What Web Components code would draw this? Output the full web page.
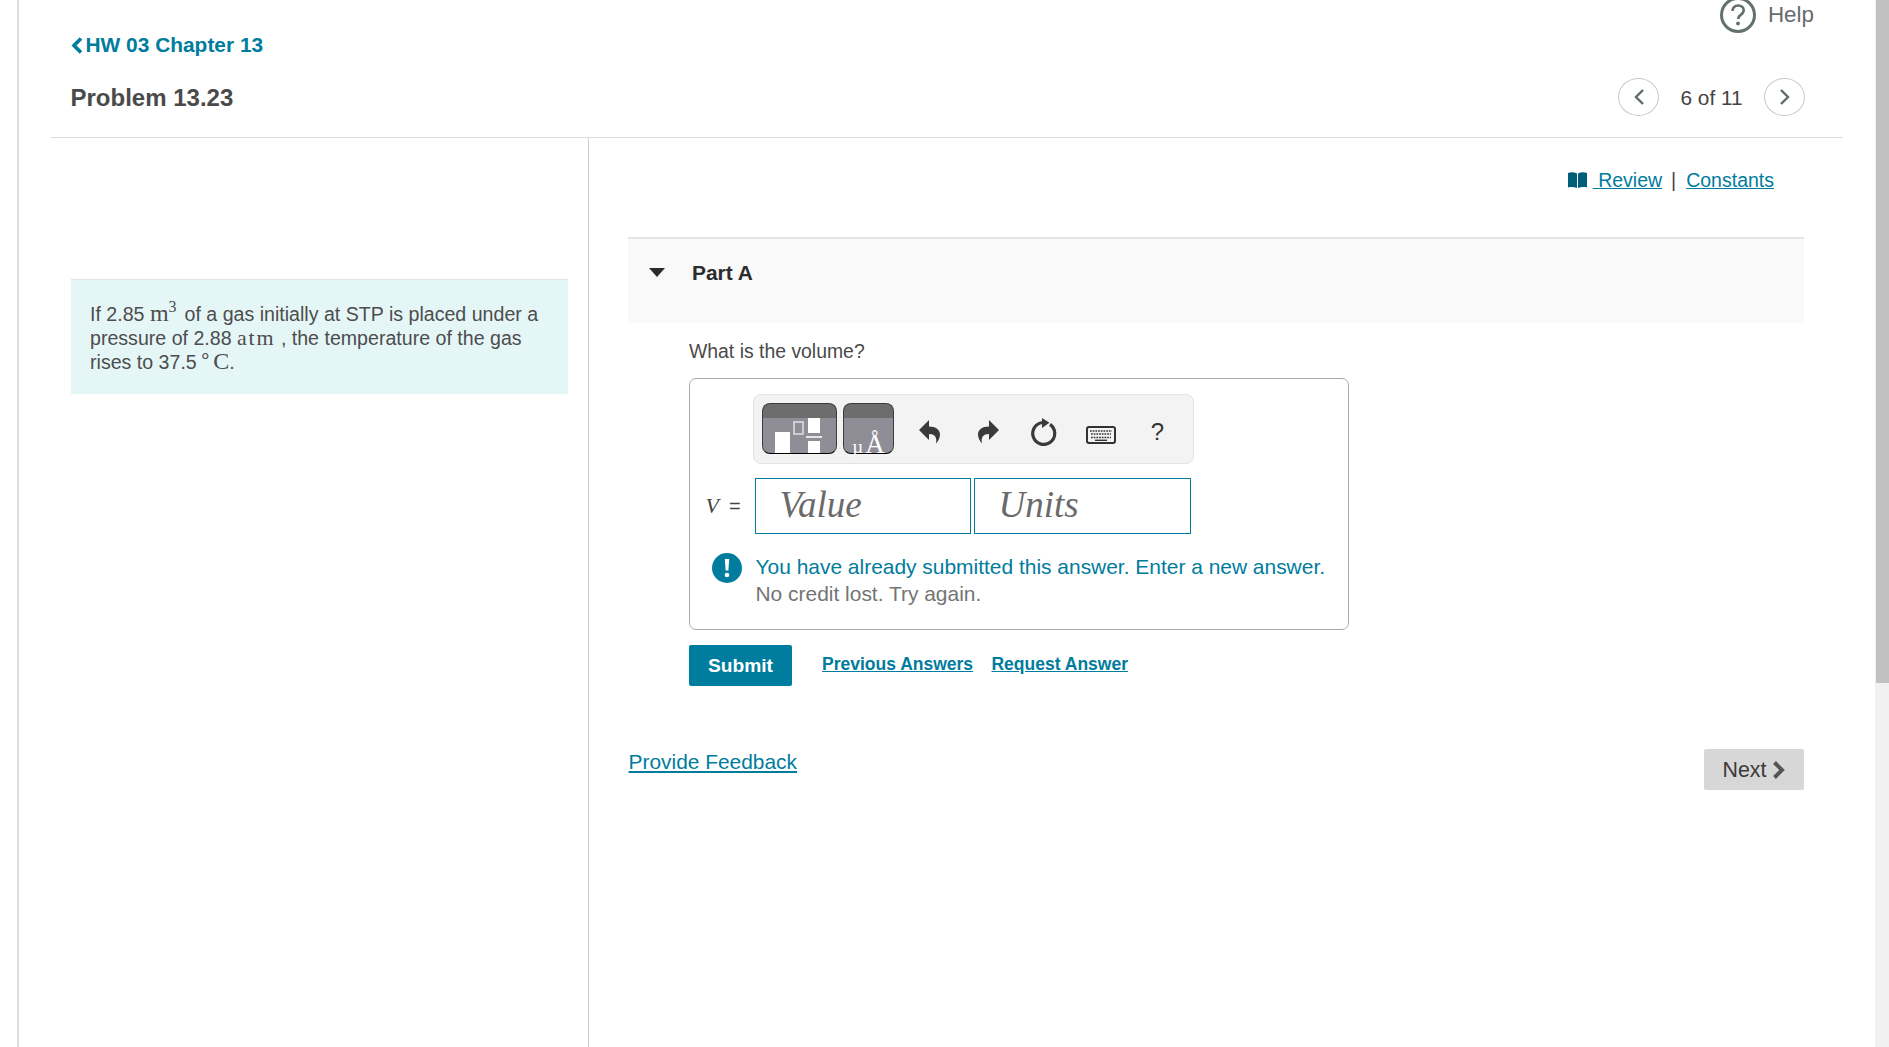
<!DOCTYPE html>
<html lang="en"><head><meta charset="utf-8"><title>Problem 13.23</title>
<style>html,body{margin:0;padding:0;background:#fff}</style></head>
<body>
<mp-app>
  <mp-page>
    <mp-header></mp-header>
    <mp-columns>
      <mp-statement slot="left"></mp-statement>
      <mp-links slot="right"></mp-links>
      <mp-part slot="right"></mp-part>
      <mp-question slot="right"></mp-question>
      <mp-answer slot="right"></mp-answer>
      <mp-actions slot="right"></mp-actions>
      <mp-footer slot="right"></mp-footer>
    </mp-columns>
  </mp-page>
  <mp-scrollbar></mp-scrollbar>
</mp-app>
<script>
const teal='#007c9e';
function def(name,html){customElements.define(name,class extends HTMLElement{constructor(){super();this.attachShadow({mode:'open'}).innerHTML=html;}});}

def('mp-app',`<style>:host{display:flex;height:100vh;overflow:hidden;background:#fff;color:#4a4a4a;font-family:"Liberation Sans",Arial,sans-serif}</style><slot></slot>`);

def('mp-page',`<style>:host{flex:1;min-width:0;display:flex;flex-direction:column;margin-left:17px;border-left:2px solid #dedede;padding-left:32px;margin-right:32px}</style><slot></slot>`);

def('mp-scrollbar',`<style>:host{display:block;width:14px;flex:none;background:#f1f1f1}
div{height:683px;margin-left:1px;background:#c1c1c1}</style><div></div>`);

def('mp-header',`<style>
:host{display:grid;grid-template-columns:1fr auto;grid-template-rows:68px 69px;height:138px;box-sizing:border-box;padding:0 38px 0 19.500px;border-bottom:1px solid #dddddf}
.back{margin:33px 0 0 .5px;font:bold 20.9px/24px "Liberation Sans",sans-serif;color:${teal};display:flex;align-items:center;gap:2.500px;text-decoration:none;align-self:start;justify-self:start}
.help{display:flex;align-items:center;gap:12px;margin:-3px -9px 0 0;align-self:start;justify-self:end;height:36px;font-size:22.4px;color:#666c6c}
h1{margin:16px 0 0;font:bold 24px/28px "Liberation Sans",sans-serif;color:#4a4a4a}
.nav{display:flex;align-items:center;align-self:start;margin-top:10px;height:37px}
.c{width:41px;height:38px;box-sizing:border-box;border:1px solid #c8c8c8;border-radius:50%;display:flex;align-items:center;justify-content:center}
.n{font-size:20.800px;line-height:24px;color:#444;width:105px;text-align:center;padding-top:3px}
svg{display:block}
</style>
<a class="back"><svg width="12" height="17" viewBox="0 0 12 17"><path d="M10 1.5 3 8.5l7 7" fill="none" stroke="${teal}" stroke-width="3.6"/></svg><span>HW 03 Chapter 13</span></a>
<div class="help"><svg width="36" height="36" viewBox="0 0 36 36"><circle cx="18" cy="18" r="16.5" fill="none" stroke="#637070" stroke-width="3"/><path d="M12.5 14c0-3.4 2.4-5.5 5.7-5.5 3.2 0 5.5 2 5.5 4.8 0 2.3-1.2 3.4-3 4.6-1.7 1.1-2.5 2-2.5 4.1" fill="none" stroke="#637070" stroke-width="2.6"/><circle cx="18" cy="26.5" r="1.9" fill="#637070"/></svg><span>Help</span></div>
<h1>Problem 13.23</h1>
<div class="nav"><div class="c"><svg width="12" height="18" viewBox="0 0 12 18"><path d="M10 2 3 9l7 7" fill="none" stroke="#5f6a6a" stroke-width="2.4"/></svg></div><span class="n">6 of 11</span><div class="c"><svg width="12" height="18" viewBox="0 0 12 18"><path d="M2 2l7 7-7 7" fill="none" stroke="#5f6a6a" stroke-width="2.4"/></svg></div></div>`);

def('mp-columns',`<style>:host{flex:1;display:grid;grid-template-columns:538px 1fr;min-height:0}
.l{border-right:1px solid #c3d0e0;padding:141px 20px 0 20px}
.r{padding:0 39px 0 39px;display:block}</style>
<div class="l"><slot name="left"></slot></div><div class="r"><slot name="right"></slot></div>`);

def('mp-statement',`<style>:host{display:block;background:#e5f6f7;border-top:1px solid #dfe3e3;padding:22px 19px 0;height:92px;font-size:19.600px;line-height:24px;color:#4d4d4d}
.m{font-family:"Liberation Serif",serif;font-size:24px;line-height:0}
sup{font:16px/0 "Liberation Serif",serif;vertical-align:9.500px}
.s3{margin-right:2.500px}.deg{font-size:20px;vertical-align:6px;margin-left:-3px;margin-right:1px}
.a{font-family:"Liberation Serif",serif;font-size:22px;letter-spacing:1.800px;line-height:0}</style>
If 2.85 <span class="m">m</span><sup class="s3">3</sup> of a gas initially at STP is placed under a pressure of 2.88 <span class="a">atm</span> , the temperature of the gas rises to 37.5 <sup class="deg">∘</sup><span class="m">C</span>.`);

def('mp-links',`<style>:host{display:flex;justify-content:flex-end;align-items:center;padding:30px 30px 0 0;height:24px;font-size:19.5px;line-height:24px;color:#444}
a{color:${teal};text-decoration:underline;display:inline-flex;align-items:center}
svg{margin-right:6px;text-decoration:none}.s{margin:0 10px 0 9px}</style>
<svg width="19" height="16" viewBox="0 0 19 16"><path d="M0 1c3-1 6-1 9 .6V16c-3-1.300-6-1.300-9-.6zM19 1c-3-1-6-1-9 .6V16c3-1.300 6-1.300 9-.6z" fill="#005f78"/></svg><a>&nbsp;Review</a><span class="s">|</span><a>Constants</a>`);

def('mp-part',`<style>:host{display:flex;align-items:flex-start;gap:27px;margin-top:45px;padding:22px 0 0 21px;height:62px;border-top:2px solid #e4e4e4;background:#f9f9f9;font:bold 20.900px/24px "Liberation Sans",sans-serif;color:#2c2c2c}
svg{margin-top:7px;display:block}</style>
<svg width="16" height="9" viewBox="0 0 16 9"><path d="M0 0h16L8 9z" fill="#2b2b2b"/></svg><span>Part A</span>`);

def('mp-question',`<style>:host{display:block;margin:16px 0 15px 61px;font-size:19.4px;line-height:24px;color:#4a4a4a}</style>What is the volume?`);

def('mp-tool',`<style>:host{display:block;height:51px;box-sizing:border-box;border:1px solid #3c3c3c;border-bottom:1.5px solid #000;border-radius:8px;background:linear-gradient(#6d6d6d 0 14px,#8f8e97 14px);position:relative}</style><slot></slot>`);

def('mp-toolbar',`<style>:host{display:flex;width:441px;height:70px;box-sizing:border-box;margin-left:63px;padding:8px 0 0 8px;background:#f3f3f3;border:1px solid #e3e3e3;border-radius:8px}
mp-tool.a{width:75px;margin-right:6px;flex:none}mp-tool.b{width:51px;margin-right:7px;flex:none}
.cell{width:57px;height:51px;flex:none;display:flex;align-items:center;justify-content:center;padding-top:6px;box-sizing:border-box;font-size:24px;color:#333}
.sym{display:flex;align-items:flex-end;justify-content:center;height:100%;gap:2px;color:#fff;font-family:"Liberation Serif",serif;line-height:1}
.sym span{display:block}.mu{font-size:19px;margin-bottom:-3px}.ang{font-size:27px;margin-bottom:-5px}
svg{display:block}</style>
<mp-tool class="a"><svg width="73" height="49" viewBox="0 0 73 49"><rect x="12" y="28" width="15" height="21" fill="#fff"/><rect x="31" y="18" width="9" height="12" fill="none" stroke="#ddd" stroke-width="1.600"/><rect x="45" y="14" width="12" height="15" fill="#fff"/><rect x="43" y="32" width="16" height="2" fill="#e5e5e5"/><rect x="45" y="37" width="12" height="12" fill="#fff"/></svg></mp-tool>
<mp-tool class="b"><div class="sym"><span class="mu">µ</span><span class="ang">Å</span></div></mp-tool>
<div class="cell"><svg width="21" height="25" viewBox="0 0 21 25"><path d="M0 11 10 1V7.500C17 7.500 21 11 21 15.500 21 19 19 22.500 17 24.500 18 20 17 15 10 15V21Z" fill="#3a3a3a"/></svg></div>
<div class="cell"><svg style="margin-left:3px" width="21" height="25" viewBox="0 0 21 25"><path d="M21 11 11 1V7.500C4 7.500 0 11 0 15.500 0 19 2 22.500 4 24.500 3 20 4 15 11 15V21Z" fill="#3a3a3a"/></svg></div>
<div class="cell"><svg width="26" height="28" viewBox="0 0 26 28"><path d="M19 6.400A11 11 0 1 1 11.500 4.500" fill="none" stroke="#3a3a3a" stroke-width="3.200"/><path d="M11 0l7.500 4.800L11 10z" fill="#3a3a3a"/></svg></div>
<div class="cell" style="padding-top:13px"><svg width="30" height="18" viewBox="0 0 30 18"><rect x="1" y="1" width="28" height="16" rx="2" fill="#f3f3f3" stroke="#333" stroke-width="2"/><path d="M4 5h22M5 8h20" stroke="#333" stroke-width="1.600" stroke-dasharray="1.700 1"/><path d="M5 11.500h20" stroke="#333" stroke-width="1.600" stroke-dasharray="1.700 1"/><path d="M9 14.300h12" stroke="#333" stroke-width="1.400"/></svg></div>
<div class="cell">?</div>`);

def('mp-field',`<style>:host{display:block;box-sizing:border-box;height:56px;border:1px solid ${teal};padding-left:23.500px;font:italic 37px/52px "Liberation Serif",serif;color:#6a6a6a;background:#fff}</style><slot></slot>`);

def('mp-answer',`<style>:host{display:block;width:660px;height:252px;box-sizing:border-box;border:1px solid #aaa;border-radius:7px;padding-top:15px;background:#fff;margin-left:61px}
.row{display:flex;align-items:center;margin-top:14px;height:56px}
.lab{width:65px;box-sizing:border-box;padding-left:15.500px;font-size:20px;color:#444;white-space:nowrap}.lab i{font-family:"Liberation Serif",serif;font-size:22px;margin-right:4.500px}
mp-field.v{width:216px;margin-right:3px}mp-field.u{width:217px}
.msg{display:flex;margin:19px 0 0 22px;gap:13.500px;font-size:20.950px;line-height:27px}
.t1{color:${teal}}.t2{color:#747474}svg{flex:none;display:block;margin-top:0}</style>
<mp-toolbar></mp-toolbar>
<div class="row"><div class="lab"><i>V</i> =</div><mp-field class="v">Value</mp-field><mp-field class="u">Units</mp-field></div>
<div class="msg"><svg width="30" height="30" viewBox="0 0 30 30"><circle cx="15" cy="15" r="15" fill="${teal}"/><path d="M12.800 6h4.400l-.8 11.500h-2.800z" fill="#fff"/><circle cx="15" cy="22" r="2.300" fill="#fff"/></svg><div><div class="t1">You have already submitted this answer. Enter a new answer.</div><div class="t2">No credit lost. Try again.</div></div></div>`);

def('mp-actions',`<style>:host{display:flex;margin:15px 0 0 61px;align-items:flex-start}
button{all:unset;box-sizing:border-box;width:103px;height:41px;border-radius:2px;background:${teal};color:#fff;font:bold 19.2px/41px "Liberation Sans",sans-serif;text-align:center}
a{font:bold 17.500px/20px "Liberation Sans",sans-serif;color:${teal};text-decoration:underline;margin-top:9px}
a.p{margin-left:30px;margin-right:18.400px}</style>
<button>Submit</button><a class="p">Previous Answers</a><a>Request Answer</a>`);

def('mp-footer',`<style>:host{display:flex;justify-content:space-between;align-items:flex-start;margin:63px 0 0 0}
a{font-size:20.900px;line-height:24px;color:${teal};text-decoration:underline;padding:1px 0 0 .6px}
.next{width:100px;height:41px;background:#d7d7d7;border-radius:2px;display:flex;align-items:center;justify-content:center;gap:6px;font-size:21.400px;color:#3a3a3a}
.next span{padding-top:1px}
svg{display:block}</style>
<a>Provide Feedback</a><div class="next"><span>Next</span><svg width="13" height="18" viewBox="0 0 13 18"><path d="M2.500 1.500l7.500 7.500-7.500 7.500" fill="none" stroke="#555" stroke-width="4"/></svg></div>`);
</script>
</body></html>
